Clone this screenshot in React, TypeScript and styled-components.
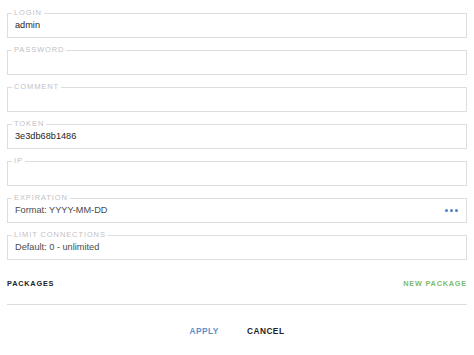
import React from 'react';
import styled, { createGlobalStyle } from 'styled-components';

const GlobalStyle = createGlobalStyle`
  html, body {
    margin: 0;
    padding: 0;
    background: #ffffff;
    font-family: "Liberation Sans", Arial, sans-serif;
  }
`;

const Page = styled('div')`
  padding: 8px 7px 0;
  width: 474px;
  box-sizing: border-box;
`;

const Field = styled('fieldset')`
  margin: 0 0 7px;
  padding: 0 7px 5px;
  border: 1px solid #dedede;
  min-width: 0;
  display: flex;
  align-items: center;
`;

const Legend = styled('legend')`
  padding: 0 2px;
  margin-left: -3px;
  font-size: 7.5px;
  line-height: 10px;
  letter-spacing: 0.9px;
  color: #bfbfc6;
  text-transform: uppercase;
`;

const Input = styled('input')`
  flex: 1;
  border: none;
  outline: none;
  padding: 0;
  margin: 0;
  height: 14px;
  font-family: "Liberation Sans", Arial, sans-serif;
  font-size: 9.2px;
  color: #1e1e1e;
  background: transparent;

  &::placeholder {
    color: #4a4a4a;
  }
`;

const Dots = styled('span')`
  display: flex;
  gap: 2px;
  margin-right: 1px;

  i {
    width: 3px;
    height: 3px;
    border-radius: 50%;
    background: #4c82c4;
  }
`;

const Row = styled('div')`
  display: flex;
  justify-content: space-between;
  align-items: center;
  margin-top: 16px;
  height: 14px;
`;

const Caption = styled('span')<{ $color?: string }>`
  font-size: 7.3px;
  font-weight: bold;
  letter-spacing: 0.8px;
  color: ${(p) => p.$color || '#222'};
`;

const Divider = styled('hr')`
  border: none;
  border-top: 1px solid #dcdcdc;
  margin: 14px 0 0;
`;

const Actions = styled('div')`
  display: flex;
  justify-content: center;
  gap: 28px;
  margin-top: 21px;
`;

const Button = styled('button')<{ $color: string }>`
  border: none;
  background: none;
  padding: 0;
  font-family: "Liberation Sans", Arial, sans-serif;
  font-size: 8.3px;
  font-weight: bold;
  letter-spacing: 0.5px;
  line-height: 10px;
  color: ${(p) => p.$color};
`;

const fields = [
  { label: 'Login', value: 'admin' },
  { label: 'Password', value: '' },
  { label: 'Comment', value: '' },
  { label: 'Token', value: '3e3db68b1486' },
  { label: 'IP', value: '' },
  { label: 'Expiration', placeholder: 'Format: YYYY-MM-DD', dots: true },
  { label: 'Limit connections', placeholder: 'Default: 0 - unlimited' },
];

export default function App() {
  return (
    <Page>
      <GlobalStyle />
      {fields.map((f) => (
        <Field key={f.label}>
          <Legend>{f.label}</Legend>
          <Input defaultValue={f.value} placeholder={f.placeholder} />
          {f.dots && (
            <Dots>
              <i />
              <i />
              <i />
            </Dots>
          )}
        </Field>
      ))}
      <Row>
        <Caption>PACKAGES</Caption>
        <Caption $color="#7cbb6c">NEW PACKAGE</Caption>
      </Row>
      <Divider />
      <Actions>
        <Button $color="#5b90c9">APPLY</Button>
        <Button $color="#222">CANCEL</Button>
      </Actions>
    </Page>
  );
}
